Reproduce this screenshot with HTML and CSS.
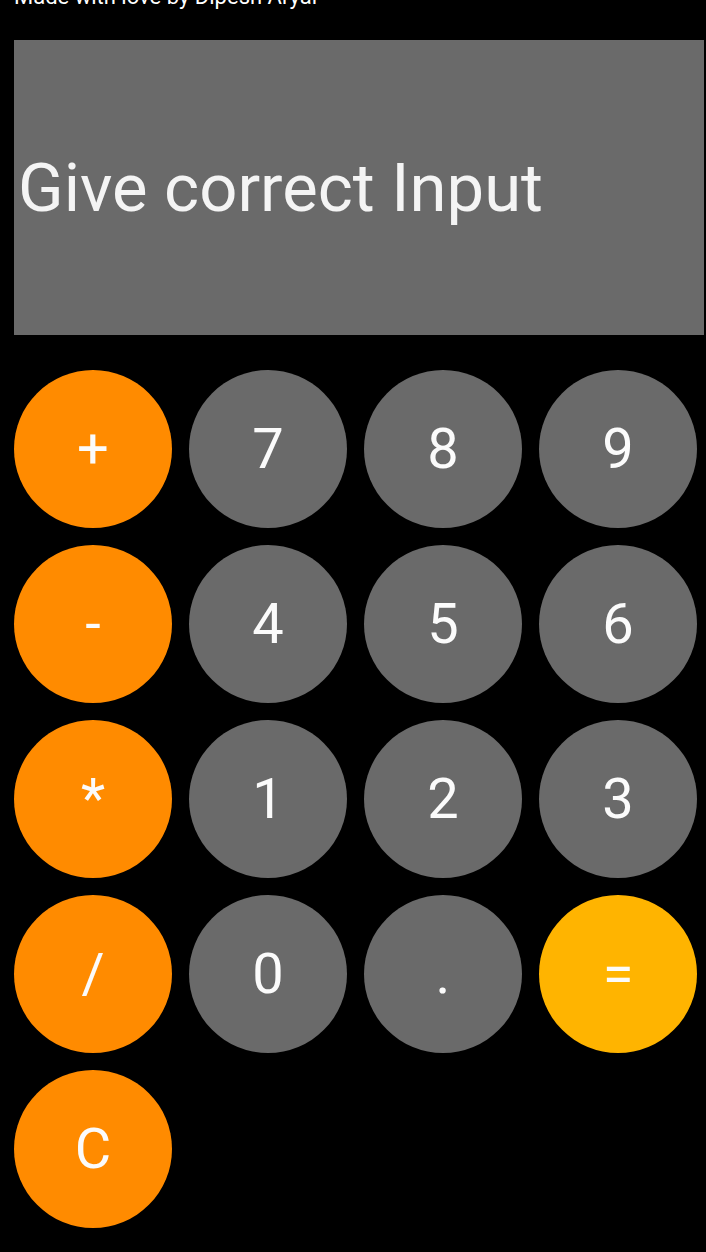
FILE: index.html
```html
<!DOCTYPE html>
<html lang="en">
<head>
<meta charset="utf-8">
<title>Calculator</title>
<link rel="stylesheet" href="styles.css">
</head>
<body>
<div class="app">
  <p class="credit">Made with love by Dipesh Aryal</p>
  <div class="display">Give correct Input</div>
  <div class="keys">
    <button class="key op">+</button>
    <button class="key num">7</button>
    <button class="key num">8</button>
    <button class="key num">9</button>
    <button class="key op">-</button>
    <button class="key num">4</button>
    <button class="key num">5</button>
    <button class="key num">6</button>
    <button class="key op">*</button>
    <button class="key num">1</button>
    <button class="key num">2</button>
    <button class="key num">3</button>
    <button class="key op">/</button>
    <button class="key num">0</button>
    <button class="key num">.</button>
    <button class="key eq">=</button>
    <button class="key op">C</button>
  </div>
</div>
</body>
</html>
```
FILE: styles.css
```css
html, body {
  margin: 0;
  padding: 0;
  background: #000;
}
body {
  font-family: Roboto, "Liberation Sans", sans-serif;
  color: #fff;
  overflow: hidden;
}
.app {
  padding: 0 2px 0 14px;
}
.credit {
  margin: -14px 0 0 0;
  font-size: 22px;
  line-height: 22px;
  height: 22px;
  color: #fff;
}
.display {
  margin-top: 32px;
  height: 295px;
  background: #6a6a6a;
  display: flex;
  align-items: center;
  padding-left: 4px;
  font-size: 67px;
  color: #f4f4f4;
}
.keys {
  margin-top: 35px;
  display: grid;
  grid-template-columns: repeat(4, 158px);
  grid-auto-rows: 158px;
  column-gap: 17px;
  row-gap: 17px;
}
.key {
  width: 158px;
  height: 158px;
  border: none;
  border-radius: 50%;
  padding: 0;
  margin: 0;
  font-family: Roboto, "Liberation Sans", sans-serif;
  font-size: 56px;
  color: #fbfbfb;
  display: flex;
  align-items: center;
  justify-content: center;
}
.num { background: #6a6a6a; }
.op { background: #ff8b00; }
.eq { background: #ffb400; }
```
